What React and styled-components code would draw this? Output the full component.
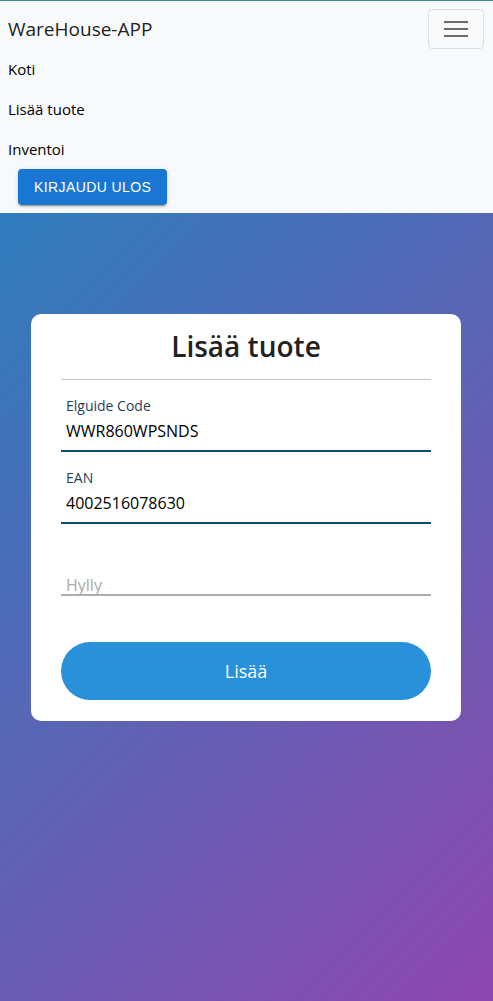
import React from "react";
import styled, { createGlobalStyle } from "styled-components";

const Global = createGlobalStyle`
  html, body { margin: 0; padding: 0; }
  body {
    font-family: "Segoe UI", "Open Sans", "Noto Sans", sans-serif;
    font-size: 16px;
    color: #212529;
    background: #f8f9fa;
  }
  * { box-sizing: border-box; }
`;

const Page = styled.div`
  display: flex;
  flex-direction: column;
  min-height: 1001px;
`;

const Navbar = styled.nav`
  background: #f8f9fa;
  border-top: 1px solid #3d8a90;
  padding: 8px 9px 8px 8px;
  display: flex;
  flex-direction: column;
`;

const NavTop = styled.div`
  display: flex;
  align-items: center;
  justify-content: space-between;
  height: 40px;
`;

const Brand = styled.a`
  font-size: 19px;
  line-height: 30px;
  color: rgba(0, 0, 0, 0.9);
  text-decoration: none;
`;

const Toggler = styled.button`
  width: 56px;
  height: 40px;
  border: 1px solid rgba(0, 0, 0, 0.1);
  border-radius: 4px;
  background: transparent;
  display: flex;
  align-items: center;
  justify-content: center;
  padding: 0;
`;

const NavLink = styled.a`
  display: block;
  font-size: 15px;
  line-height: 24px;
  padding: 8px 0;
  color: #000;
  text-decoration: none;
`;

const LogoutButton = styled.button`
  align-self: flex-start;
  margin-left: 10px;
  height: 36px;
  padding: 6px 16px;
  background: #1976d2;
  color: #fff;
  border: none;
  border-radius: 4px;
  font-family: "Liberation Sans", Arial, sans-serif;
  font-weight: 400;
  font-size: 14px;
  letter-spacing: 0.4px;
  text-transform: uppercase;
  box-shadow: 0px 3px 1px -2px rgba(0,0,0,0.2), 0px 2px 2px 0px rgba(0,0,0,0.14), 0px 1px 5px 0px rgba(0,0,0,0.12);
`;

const Main = styled.main`
  flex: 1;
  background: linear-gradient(135deg, #2f7dbd 0%, #8e47ad 100%);
  padding-top: 101px;
`;

const Card = styled.div`
  width: 430px;
  margin: 0 32px 0 31px;
  background: #fff;
  border-radius: 10px;
  padding: 14px 30px 21px 30px;
`;

const Title = styled.h1`
  margin: 0;
  text-align: center;
  font-size: 28px;
  line-height: 36px;
  font-weight: 600;
  color: #222;
`;

const Divider = styled.hr`
  margin: 15px 0 0;
  border: none;
  border-top: 1px solid #c4c4c4;
`;

const Field = styled.div`
  display: flex;
  flex-direction: column;
  margin-top: ${(p) => p.$mt}px;
  border-bottom: 2px solid ${(p) => (p.$filled ? "#0c4a6e" : "#adadad")};
  padding: 0 5px ${(p) => (p.$filled ? 7 : 0)}px;
`;

const Label = styled.label`
  font-size: 14px;
  line-height: 20px;
  color: #1f3f5a;
  margin-bottom: 3px;
`;

const Input = styled.input`
  border: none;
  outline: none;
  padding: 0;
  font-family: inherit;
  font-size: 16px;
  line-height: ${(p) => (p.$tight ? 18 : 24)}px;
  height: ${(p) => (p.$tight ? 18 : 24)}px;
  color: #000;
  background: transparent;
  &::placeholder { color: #aaa; }
`;

const Submit = styled.button`
  display: block;
  width: 100%;
  margin-top: 46px;
  height: 58px;
  border: none;
  border-radius: 29px;
  background: #2891d9;
  color: #fff;
  font-family: inherit;
  font-size: 18px;
`;

export default function App() {
  return (
    <>
      <Global />
      <Page>
        <Navbar>
          <NavTop>
            <Brand href="#">WareHouse-APP</Brand>
            <Toggler aria-label="menu">
              <svg width="24" height="18" viewBox="0 0 24 18">
                <g stroke="#6c6c6c" strokeWidth="2" strokeLinecap="butt">
                  <line x1="0" y1="2" x2="24" y2="2" />
                  <line x1="0" y1="9" x2="24" y2="9" />
                  <line x1="0" y1="16" x2="24" y2="16" />
                </g>
              </svg>
            </Toggler>
          </NavTop>
          <NavLink href="#">Koti</NavLink>
          <NavLink href="#">Lisää tuote</NavLink>
          <NavLink href="#">Inventoi</NavLink>
          <LogoutButton>Kirjaudu ulos</LogoutButton>
        </Navbar>
        <Main>
          <Card>
            <Title>Lisää tuote</Title>
            <Divider />
            <Field $filled $mt={16}>
              <Label>Elguide Code</Label>
              <Input defaultValue="WWR860WPSNDS" />
            </Field>
            <Field $filled $mt={16}>
              <Label>EAN</Label>
              <Input defaultValue="4002516078630" />
            </Field>
            <Field $mt={52}>
              <Input $tight placeholder="Hylly" />
            </Field>
            <Submit>Lisää</Submit>
          </Card>
        </Main>
      </Page>
    </>
  );
}
